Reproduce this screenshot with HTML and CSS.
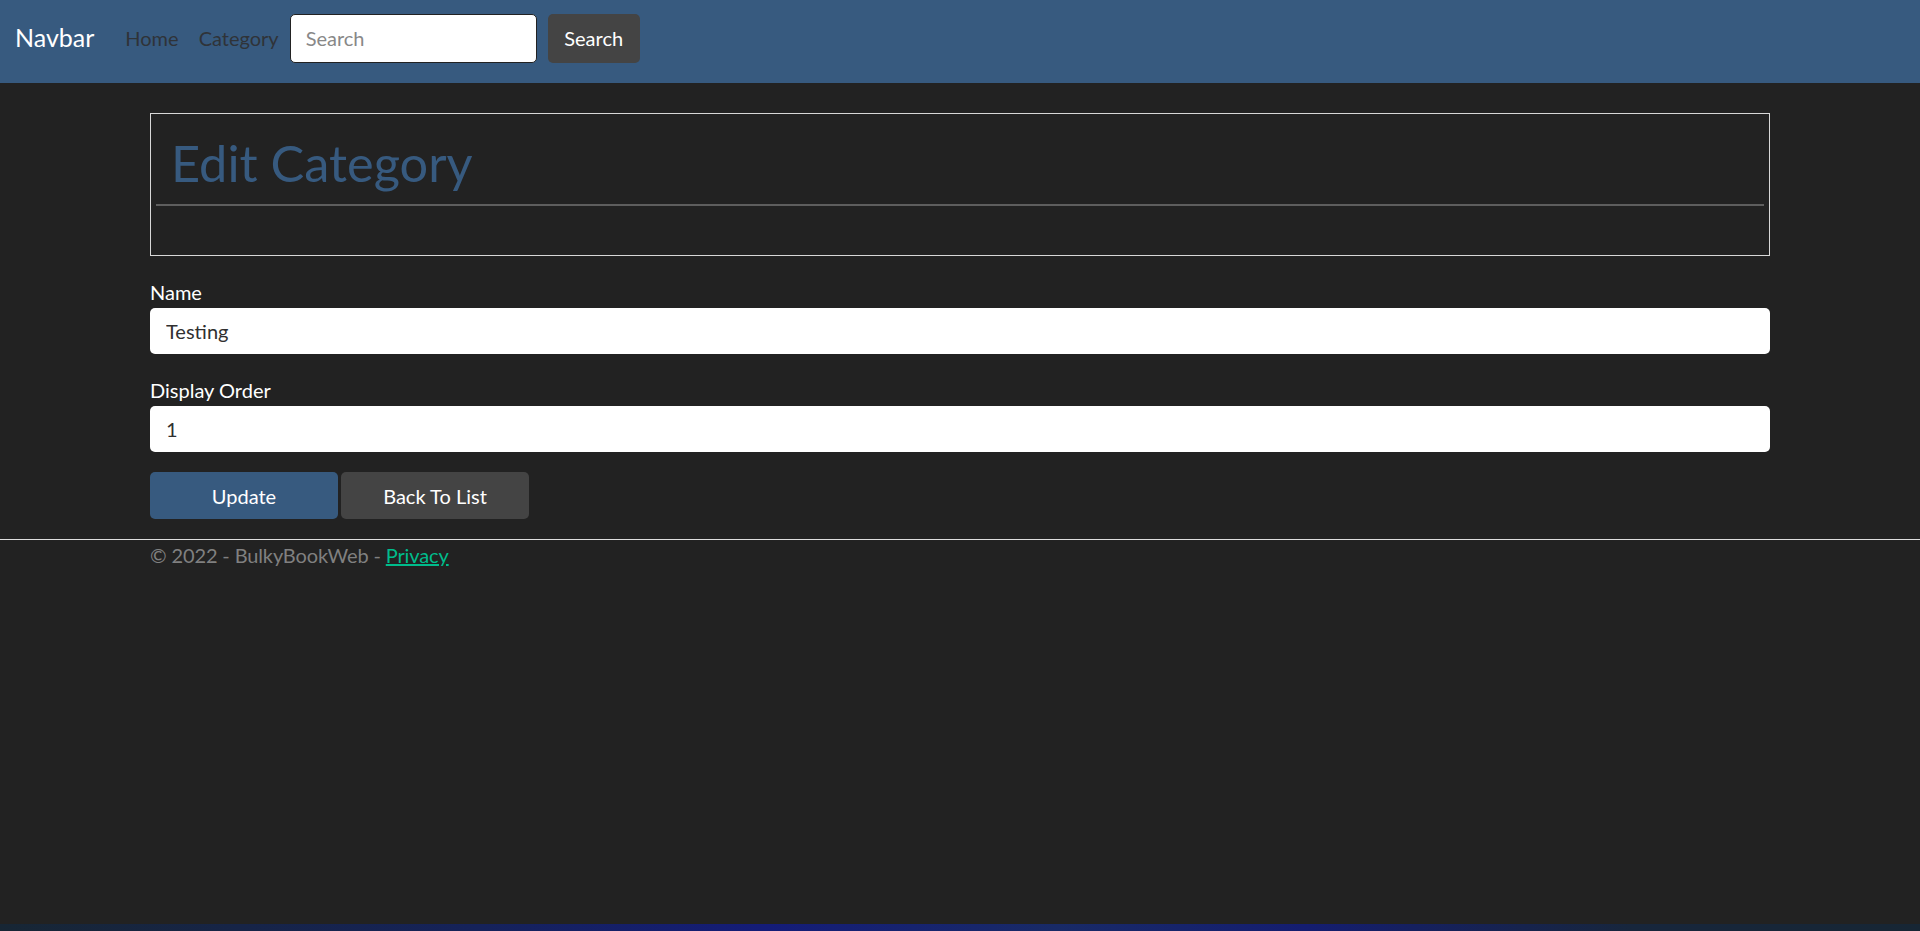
FILE: index.html
```html
<!DOCTYPE html>
<html lang="en">
<head>
<meta charset="utf-8">
<title>Edit Category - BulkyBookWeb</title>
<link rel="stylesheet" href="styles.css">
</head>
<body>
<header class="navbar">
  <a class="brand" href="#">Navbar</a>
  <nav class="nav">
    <a class="nav-link" href="#">Home</a>
    <a class="nav-link" href="#">Category</a>
  </nav>
  <form class="search-form">
    <input class="search-input" type="text" placeholder="Search">
    <button class="btn btn-search" type="button">Search</button>
  </form>
</header>

<main class="container">
  <form class="edit-form">
    <div class="title-box">
      <h2 class="title">Edit Category</h2>
      <hr class="divider">
    </div>
    <div class="field">
      <label class="field-label">Name</label>
      <input class="field-input" type="text" value="Testing">
    </div>
    <div class="field">
      <label class="field-label">Display Order</label>
      <input class="field-input" type="text" value="1">
    </div>
    <div class="actions">
      <button class="btn btn-wide btn-primary" type="button">Update</button>
      <a class="btn btn-wide btn-secondary" href="#">Back To List</a>
    </div>
  </form>
</main>

<footer class="footer">
  <div class="container footer-text">&copy; 2022 - BulkyBookWeb - <a class="footer-link" href="#">Privacy</a></div>
</footer>

<div class="taskbar-edge"></div>
</body>
</html>
```

FILE: styles.css
```css
* { box-sizing: border-box; }

html, body {
  margin: 0;
  padding: 0;
  height: 100%;
}

body {
  background: #222222;
  color: #ffffff;
  font-family: Lato, "Liberation Sans", sans-serif;
  font-size: 20px;
  line-height: 1.5;
  overflow: hidden;
}

a { text-decoration: none; }

/* Navbar */
.navbar {
  display: flex;
  align-items: center;
  height: 83px;
  padding: 13px 15px 20px;
  background: #375a7f;
}

.brand {
  color: #ffffff;
  font-size: 25px;
  line-height: 37.5px;
  padding: 6.25px 0;
  margin-right: 21px;
}

.nav {
  display: flex;
}

.nav-link {
  color: #2f3338;
  padding: 10px 10px;
  line-height: 30px;
}

.search-form {
  display: flex;
  align-items: center;
  margin-left: 1px;
}

.search-input {
  width: 247px;
  height: 49px;
  padding: 0 15px;
  border: 1px solid #222222;
  border-radius: 5px;
  background: #ffffff;
  color: #303030;
  font-family: inherit;
  font-size: 20px;
  margin-right: 11px;
  outline: none;
}

.search-input::placeholder { color: #888888; }

.btn {
  display: inline-flex;
  align-items: center;
  justify-content: center;
  border: 0;
  border-radius: 5px;
  color: #ffffff;
  font-family: inherit;
  font-size: 20px;
  cursor: pointer;
}

.btn-search {
  width: 92px;
  height: 49px;
  background: #444444;
}

/* Main */
.container {
  width: 1620px;
  margin: 0 auto;
}

.edit-form {
  padding-top: 30px;
}

.title-box {
  border: 1px solid #d8d8d8;
  padding: 5px;
  height: 143px;
}

.title {
  margin: 0;
  padding: 14px 15px 0;
  color: #375a7f;
  font-size: 50.5px;
  font-weight: 400;
  line-height: 60px;
}

.divider {
  margin: 11px 0 0;
  border: 0;
  height: 2px;
  background: #5e5e5e;
}

.field {
  margin-top: 21px;
}

.field-label {
  display: block;
  line-height: 31px;
  color: #ffffff;
}

.field-input {
  display: block;
  width: 100%;
  height: 46px;
  padding: 0 16px;
  border: 0;
  border-radius: 5px;
  background: #ffffff;
  color: #303030;
  font-family: inherit;
  font-size: 20px;
  outline: none;
}

.actions {
  display: flex;
  gap: 3px;
  margin-top: 20px;
}

.btn-wide {
  width: 188px;
  height: 47px;
}

.btn-primary { background: #375a7f; }
.btn-secondary { background: #444444; }

/* Footer */
.footer {
  margin-top: 20px;
  border-top: 1px solid #dedede;
}

.footer-text {
  color: #808080;
  line-height: 30px;
  letter-spacing: -0.13px;
}

.footer-link {
  color: #00bc8c;
  text-decoration: underline;
}

.taskbar-edge {
  position: fixed;
  left: 0;
  right: 0;
  bottom: 0;
  height: 7px;
  background: linear-gradient(90deg, #172634 0%, #15225a 25%, #141c78 40%, #182a66 55%, #141d70 68%, #17263c 85%, #172634 100%);
}
```
